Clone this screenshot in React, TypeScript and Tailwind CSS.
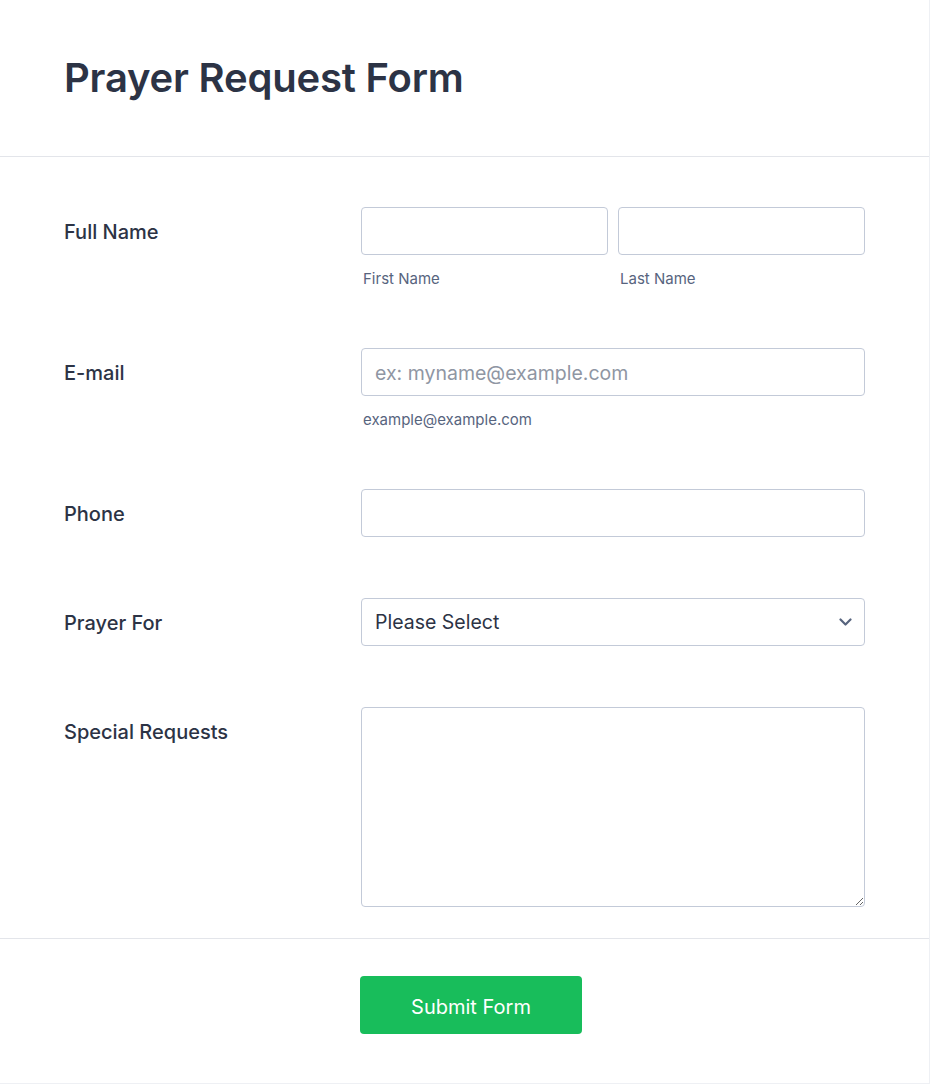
import React from 'react';

const Sublabel: React.FC<{ text: string }> = ({ text }) => (
  <div className="mt-[15px] h-[17px] pl-[2px] text-[15px] leading-[17px] text-[#57647e]">{text}</div>
);

const Label: React.FC<{ text: string }> = ({ text }) => (
  <div className="flex h-12 w-[297px] shrink-0 items-center pt-[2px] text-[20px] font-medium text-[#2c3345]">{text}</div>
);

const inputCls =
  'h-12 w-full rounded-[4px] border border-[#c3cad8] bg-white px-[13px] pt-[2px] text-[19.5px] text-[#2c3345] outline-none placeholder:text-[#8f96a3]';

const App: React.FC = () => {
  return (
    <div className="min-h-screen bg-white" style={{ fontFamily: 'Inter, "Noto Sans", sans-serif' }}>
      <div className="w-[930px] border-r border-b border-[#eef0f4] bg-white">
        {/* Header */}
        <div className="flex h-[157px] items-center border-b border-[#e3e5ea] px-16">
          <h1 className="text-[40px] font-semibold tracking-[-0.2px] text-[#2c3345]">Prayer Request Form</h1>
        </div>

        {/* Fields */}
        <div className="flex flex-col gap-[61px] px-16 pt-[50px] pb-[31px]">
          <div className="flex">
            <Label text="Full Name" />
            <div className="flex flex-1 gap-[10px]">
              <div className="flex-1">
                <input className={inputCls} />
                <Sublabel text="First Name" />
              </div>
              <div className="flex-1">
                <input className={inputCls} />
                <Sublabel text="Last Name" />
              </div>
            </div>
          </div>

          <div className="flex">
            <Label text="E-mail" />
            <div className="flex-1">
              <input className={inputCls} placeholder="ex: myname@example.com" />
              <Sublabel text="example@example.com" />
            </div>
          </div>

          <div className="flex">
            <Label text="Phone" />
            <div className="flex-1">
              <input className={inputCls} />
            </div>
          </div>

          <div className="flex">
            <Label text="Prayer For" />
            <div className="relative flex-1">
              <select className={inputCls + ' appearance-none pr-10'} defaultValue="">
                <option value="">Please Select</option>
              </select>
              <svg
                className="pointer-events-none absolute top-1/2 right-[13px] -translate-y-1/2"
                width="13"
                height="8"
                viewBox="0 0 13 8"
                fill="none"
              >
                <path d="M1.5 1.5L6.5 6.5L11.5 1.5" stroke="#57647e" strokeWidth="2.2" strokeLinecap="round" strokeLinejoin="round" />
              </svg>
            </div>
          </div>

          <div className="flex">
            <Label text="Special Requests" />
            <div className="flex-1">
              <textarea className="block h-[200px] w-full rounded-[4px] border border-[#c3cad8] bg-white px-[13px] py-3 text-[19.5px] text-[#2c3345] outline-none" />
            </div>
          </div>
        </div>

        {/* Footer */}
        <div className="flex border-t border-[#e3e5ea] pt-[37px] pr-16 pb-[49px] pl-[360px]">
          <button className="h-[58px] w-[222px] rounded-[4px] bg-[#18bd5b] pt-[3px] text-[20px] text-white">Submit Form</button>
        </div>
      </div>
    </div>
  );
};

export default App;
